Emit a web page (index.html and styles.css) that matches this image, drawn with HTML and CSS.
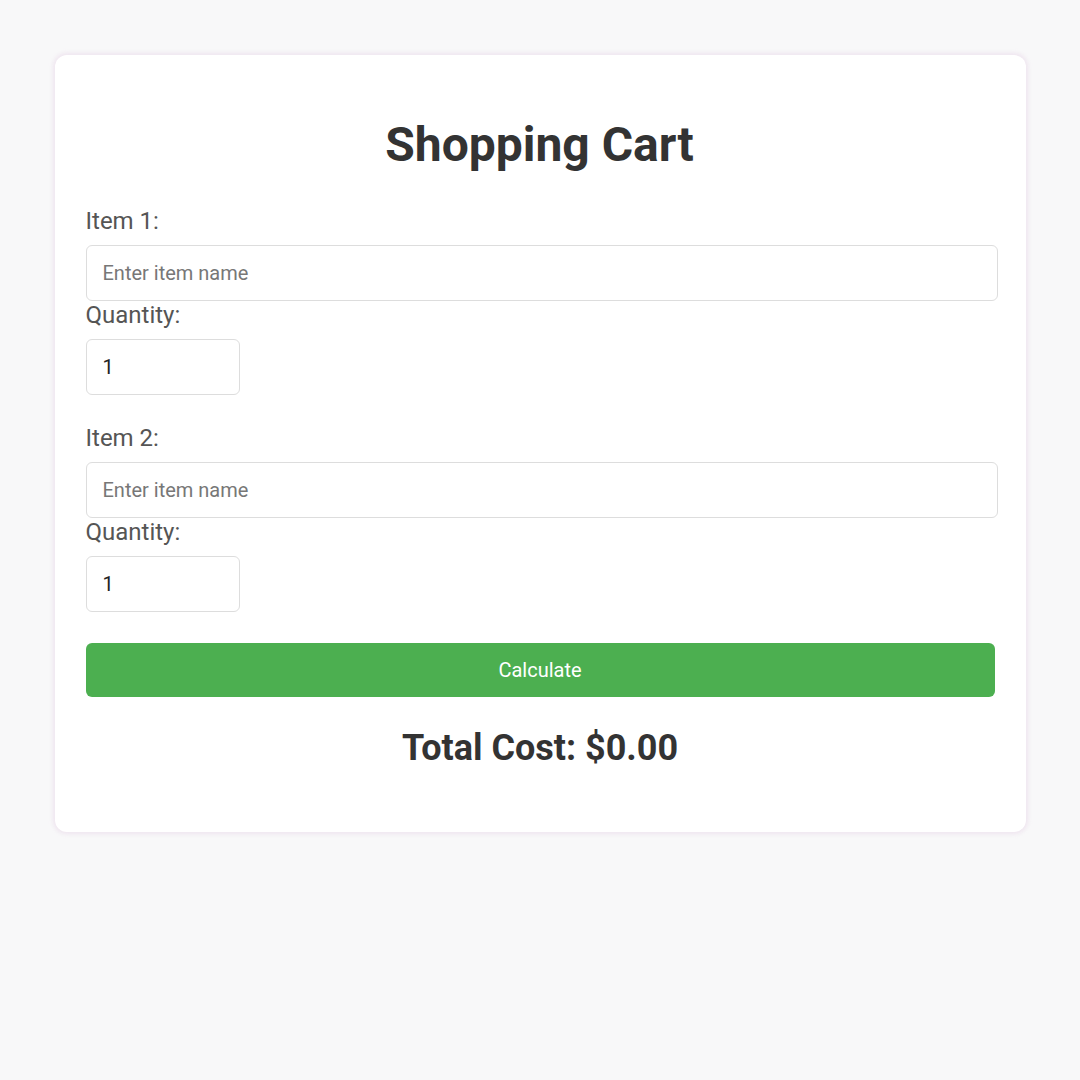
FILE: index.html
```html
<html>
    <head>
        <title>Shopping Cart</title>
        <link rel="stylesheet" href="styles.css">
    </head>
    <body>
        <div class="cart">
            <h1 class="center">Shopping Cart</h1>

            <div class="item">
                <label for="item1">Item 1:</label>
                <input type="text" id="item1" class="name" placeholder="Enter item name">
                <label for="qty1">Quantity:</label>
                <input type="number" id="qty1" class="qty" value="1" min="1">
            </div>

            <div class="item">
                <label for="item2">Item 2:</label>
                <input type="text" id="item2" class="name" placeholder="Enter item name">
                <label for="qty2">Quantity:</label>
                <input type="number" id="qty2" class="qty" value="1" min="1">
            </div>

            <button class="calc" onclick="calculate()">Calculate</button>

            <h2 class="center" id="total">Total Cost: $0.00</h2>
        </div>

        <script>
            function calculate() {
                var total = 0;
                // no prices yet, every item costs 0
                document.getElementById("total").innerHTML = "Total Cost: $" + total.toFixed(2);
            };
        </script>
    </body>
</html>
```

FILE: styles.css
```css
body {
    margin: 0;
    padding-top: 55px;
    background-color: #f8f8f9;
    font-family: Roboto, "Liberation Sans", sans-serif;
}
.center {
    text-align: center;
}
.cart {
    width: 971px;
    margin: 0 auto;
    padding: 30px 28px 33px 31px;
    box-sizing: border-box;
    background-color: #fff;
    border-radius: 12px;
    box-shadow: 0 0 4px 2px rgba(225, 200, 225, 0.4);
}
h1 {
    font-size: 48px;
    line-height: 56px;
    margin: 32px 0 34px -4px;
    color: #333;
}
h2 {
    font-size: 36px;
    line-height: 42px;
    margin: 30px 0 30px -3px;
    color: #333;
}
.item {
    margin-bottom: 29px;
}
label {
    display: block;
    font-size: 24px;
    line-height: 28px;
    color: #555;
}
label + input {
    margin-top: 10px;
}
input {
    display: block;
    box-sizing: border-box;
    height: 56px;
    padding: 0 16px;
    font-family: Roboto, "Liberation Sans", sans-serif;
    font-size: 20px;
    color: #222;
    border: 1px solid #ddd;
    border-radius: 6px;
    background-color: #fff;
}
input::placeholder {
    color: #777;
}
.name {
    width: 100%;
}
.qty {
    width: 154px;
    -moz-appearance: textfield;
}
.qty::-webkit-inner-spin-button,
.qty::-webkit-outer-spin-button {
    -webkit-appearance: none;
    margin: 0;
}
.calc {
    display: block;
    width: calc(100% - 3px);
    height: 54px;
    margin-top: 31px;
    border: none;
    border-radius: 6px;
    background-color: #4caf50;
    color: #fff;
    font-family: Roboto, "Liberation Sans", sans-serif;
    font-size: 20px;
    cursor: pointer;
}
```
